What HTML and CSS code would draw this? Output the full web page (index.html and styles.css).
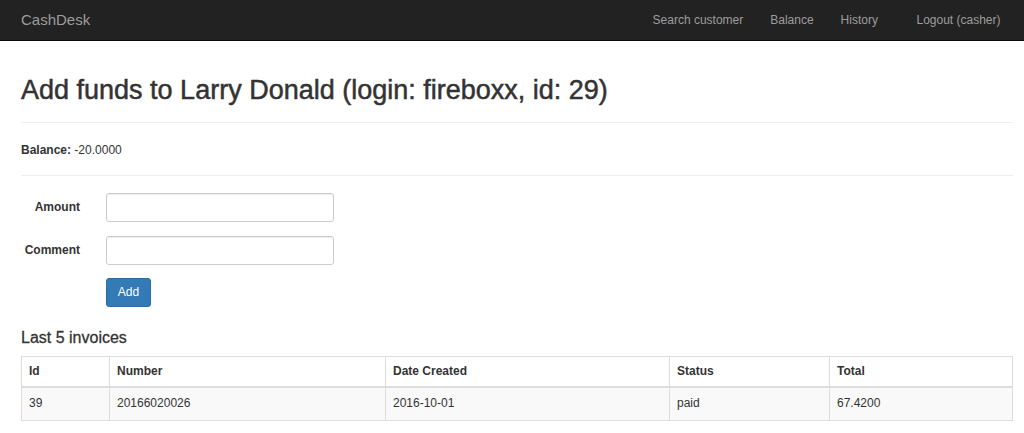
FILE: index.html
```html
<!DOCTYPE html>
<html lang="en">
<head>
<meta charset="utf-8">
<title>CashDesk</title>
<link rel="stylesheet" href="styles.css">
</head>
<body>
<nav class="navbar">
  <a class="brand" href="#">CashDesk</a>
  <div class="nav-right">
    <ul class="nav">
      <li><a href="#">Search customer</a></li>
      <li><a href="#">Balance</a></li>
      <li><a href="#">History</a></li>
    </ul>
    <ul class="nav nav-user">
      <li><a href="#">Logout (casher)</a></li>
    </ul>
  </div>
</nav>
<main class="container">
  <div class="page-header">
    <h1>Add funds to Larry Donald (login: fireboxx, id: 29)</h1>
  </div>
  <p class="balance"><strong>Balance:</strong> -20.0000</p>
  <hr class="divider">
  <form class="form">
    <div class="form-row">
      <label class="form-label" for="amount">Amount</label>
      <input class="form-input" id="amount" type="text">
    </div>
    <div class="form-row">
      <label class="form-label" for="comment">Comment</label>
      <input class="form-input" id="comment" type="text">
    </div>
    <div class="form-row form-actions">
      <button class="btn" type="button">Add</button>
    </div>
  </form>
  <h4 class="section-title">Last 5 invoices</h4>
  <table class="table">
    <colgroup>
      <col class="col-id">
      <col class="col-number">
      <col class="col-date">
      <col class="col-status">
      <col class="col-total">
    </colgroup>
    <thead>
      <tr>
        <th>Id</th>
        <th>Number</th>
        <th>Date Created</th>
        <th>Status</th>
        <th>Total</th>
      </tr>
    </thead>
    <tbody>
      <tr>
        <td>39</td>
        <td>20166020026</td>
        <td>2016-10-01</td>
        <td>paid</td>
        <td>67.4200</td>
      </tr>
    </tbody>
  </table>
</main>
</body>
</html>
```

FILE: styles.css
```css
* {
  box-sizing: border-box;
}

html, body {
  margin: 0;
  padding: 0;
}

body {
  font-family: "Liberation Sans", Arial, Helvetica, sans-serif;
  font-size: 12px;
  line-height: 17px;
  color: #333;
  background: #fff;
}

a {
  text-decoration: none;
}

.navbar {
  height: 41px;
  background: #222;
  border-bottom: 1px solid #080808;
  display: flex;
  align-items: center;
  justify-content: space-between;
  padding: 0 10px 0 21px;
}

.brand {
  color: #9d9d9d;
  font-size: 15px;
  line-height: 17px;
  margin-top: -1px;
}

.nav-right {
  display: flex;
  align-items: center;
}

.nav {
  list-style: none;
  margin: 0;
  padding: 0;
  display: flex;
}

.nav-user {
  margin-left: 11.5px;
}

.nav a {
  display: block;
  color: #9d9d9d;
  padding: 0 13.5px;
  font-size: 12px;
  line-height: 17px;
}

.container {
  padding: 0 11px 0 21px;
}

.page-header {
  margin-top: 34px;
  padding-bottom: 17px;
  border-bottom: 1px solid #eee;
}

.page-header h1 {
  margin: 0;
  font-size: 27px;
  line-height: 30px;
  font-weight: 500;
  color: #333;
  -webkit-text-stroke: 0.5px #333;
}

.balance {
  margin: 18.5px 0 0;
}

.divider {
  margin: 16.5px 0 0;
  border: 0;
  border-top: 1px solid #eee;
  height: 0;
}

.form {
  margin-top: 17px;
}

.form-row {
  display: flex;
  align-items: center;
  margin-bottom: 14px;
}

.form-row + .form-row.form-actions {
  margin-top: -1px;
}

.form-label {
  width: 59px;
  margin-right: 26px;
  text-align: right;
  font-weight: bold;
}

.form-input {
  width: 228px;
  height: 29px;
  border: 1px solid #ccc;
  border-radius: 3px;
  box-shadow: inset 0 1px 1px rgba(0, 0, 0, 0.075);
  padding: 5px 10px;
  font: inherit;
  color: #555;
  background: #fff;
}

.form-actions {
  margin-left: 85px;
  margin-bottom: 0;
}

.btn {
  height: 29px;
  width: 45px;
  padding: 0;
  font: inherit;
  font-size: 12px;
  color: #fff;
  background: #337ab7;
  border: 1px solid #2e6da4;
  border-radius: 3px;
}

.section-title {
  margin: 22px 0 8.5px;
  font-size: 16px;
  line-height: 18px;
  font-weight: 500;
  color: #333;
  -webkit-text-stroke: 0.3px #333;
}

.table {
  width: 100%;
  table-layout: fixed;
  border-collapse: separate;
  border-spacing: 0;
  border-top: 1px solid #ddd;
  border-left: 1px solid #ddd;
}

.col-id { width: 88px; }
.col-number { width: 276px; }
.col-date { width: 284px; }
.col-status { width: 160px; }

.table th,
.table td {
  text-align: left;
  border-right: 1px solid #ddd;
  border-bottom: 1px solid #ddd;
  padding: 0 7px;
  line-height: 17px;
  vertical-align: middle;
}

.table th {
  font-weight: bold;
  padding-top: 6px;
  padding-bottom: 6px;
  border-bottom-width: 2px;
}

.table td {
  padding-top: 7.5px;
  padding-bottom: 7.5px;
}

.table tbody tr:nth-child(odd) td {
  background: #f9f9f9;
}
```
